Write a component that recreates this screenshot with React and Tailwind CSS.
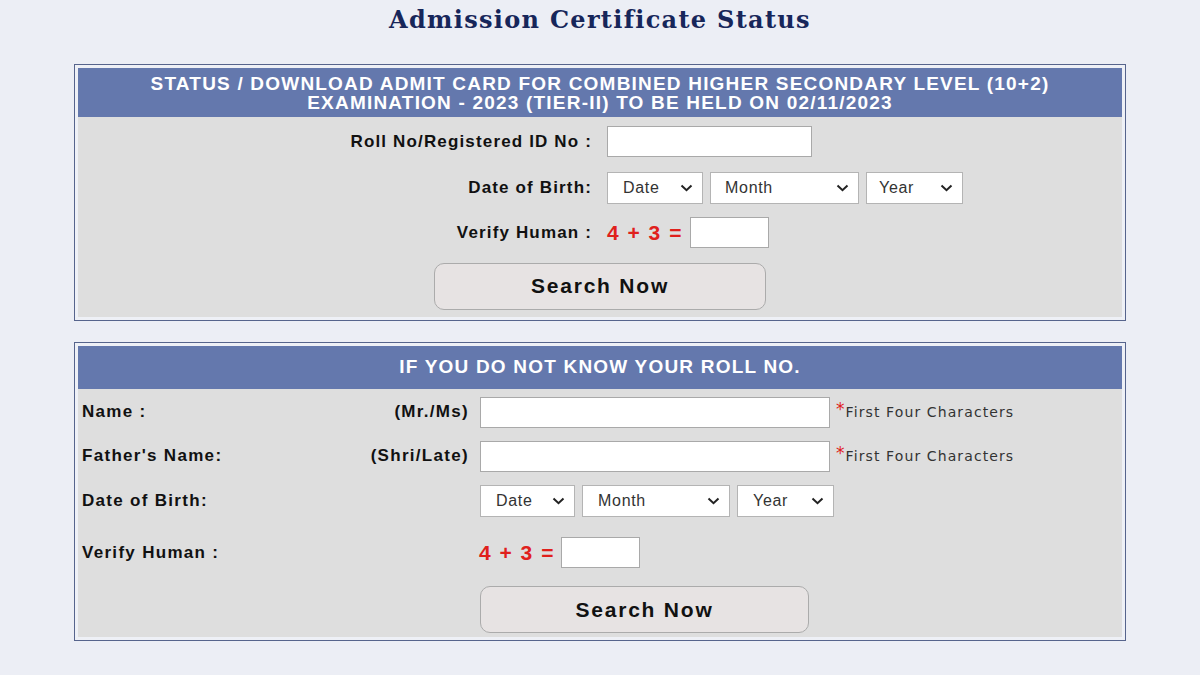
import React from "react";

const Chevron = () => (
  <svg width="13" height="8" viewBox="0 0 13 8" className="shrink-0">
    <polyline points="1.5,1.5 6.5,6.2 11.5,1.5" fill="none" stroke="#222" strokeWidth="2" />
  </svg>
);

const Select = ({ label, w, pl }) => (
  <div
    className={`h-[32px] bg-white border border-[#b4b4b4] flex items-center justify-between pr-[9px] text-[16px] tracking-[0.7px] text-[#333] ${w} ${pl}`}
  >
    <span>{label}</span>
    <Chevron />
  </div>
);

const Input = ({ w }) => <div className={`h-[31px] bg-white border border-[#a9a9a9] ${w}`} />;

const Button = ({ w }) => (
  <div
    className={`h-[47px] ${w} rounded-[10px] border border-[#ababab] bg-[#e7e3e3] flex items-center justify-center text-[21px] font-bold tracking-[1.8px] text-[#111]`}
  >
    Search Now
  </div>
);

const Note = () => (
  <span
    className="ml-[6px] text-[14px] text-[#333] tracking-[1.1px]"
    style={{ fontFamily: '"DejaVu Sans", Verdana, sans-serif' }}
  >
    <span className="text-[#e0201c] text-[17px] relative top-[-2px]">*</span>First Four Characters
  </span>
);

export default function App() {
  return (
    <div
      className="w-[1200px] h-[675px] bg-[#eceef5] overflow-hidden"
      style={{ fontFamily: '"Liberation Sans", Arial, sans-serif' }}
    >
      <div className="h-[64px] pt-[5px] text-center">
        <h1
          className="text-[24px] leading-[30px] font-bold text-[#17265a] tracking-[1.3px]"
          style={{ fontFamily: '"DejaVu Serif", "Liberation Serif", serif' }}
        >
          Admission Certificate Status
        </h1>
      </div>

      {/* Panel 1 */}
      <div className="w-[1052px] mx-auto border border-[#56648c] p-[3px] bg-[#eef0f6]">
        <div className="h-[49px] bg-[#6478ad] flex flex-col items-center justify-center text-white font-bold text-[19px] leading-[19px] tracking-[1.2px]">
          <div>STATUS / DOWNLOAD ADMIT CARD FOR COMBINED HIGHER SECONDARY LEVEL (10+2)</div>
          <div>EXAMINATION - 2023 (TIER-II) TO BE HELD ON 02/11/2023</div>
        </div>
        <div className="bg-[#dedede] pt-[9px] pb-[7px] text-[#111]">
          <div className="grid grid-cols-2 items-center">
            <div className="text-right pr-[8px] font-bold text-[17px] tracking-[1.15px]">Roll No/Registered ID No :</div>
            <div className="pl-[7px]">
              <Input w="w-[205px]" />
            </div>
          </div>
          <div className="grid grid-cols-2 items-center mt-[15px]">
            <div className="text-right pr-[8px] font-bold text-[17px] tracking-[1.15px]">Date of Birth:</div>
            <div className="pl-[7px] flex gap-[7px]">
              <Select label="Date" w="w-[96px]" pl="pl-[15px]" />
              <Select label="Month" w="w-[149px]" pl="pl-[14px]" />
              <Select label="Year" w="w-[97px]" pl="pl-[12px]" />
            </div>
          </div>
          <div className="grid grid-cols-2 items-center mt-[13px]">
            <div className="text-right pr-[8px] font-bold text-[17px] tracking-[1.15px]">Verify Human :</div>
            <div className="pl-[7px] flex items-center gap-[7px]">
              <span className="text-[#e0201c] font-bold text-[21px] tracking-[1.5px] whitespace-pre">4 + 3 =</span>
              <Input w="w-[79px]" />
            </div>
          </div>
          <div className="mt-[14px] flex justify-center">
            <Button w="w-[332px]" />
          </div>
        </div>
      </div>

      {/* Panel 2 */}
      <div className="w-[1052px] mx-auto mt-[21px] border border-[#56648c] p-[3px] bg-[#eef0f6]">
        <div className="h-[43px] bg-[#6478ad] flex items-center justify-center text-white font-bold text-[19px] tracking-[1.2px]">
          IF YOU DO NOT KNOW YOUR ROLL NO.
        </div>
        <div className="bg-[#dedede] pt-[8px] pb-[4px] pl-[4px] text-[#111]">
          <div className="flex items-center">
            <div className="w-[398px] flex justify-between pr-[11px] font-bold text-[17px] tracking-[1.3px]">
              <span>Name :</span>
              <span>(Mr./Ms)</span>
            </div>
            <Input w="w-[350px]" />
            <Note />
          </div>
          <div className="flex items-center mt-[13px]">
            <div className="w-[398px] flex justify-between pr-[11px] font-bold text-[17px] tracking-[1.3px]">
              <span>Father's Name:</span>
              <span>(Shri/Late)</span>
            </div>
            <Input w="w-[350px]" />
            <Note />
          </div>
          <div className="flex items-center mt-[13px]">
            <div className="w-[398px] font-bold text-[17px] tracking-[1.3px]">Date of Birth:</div>
            <div className="flex gap-[7px]">
              <Select label="Date" w="w-[95px]" pl="pl-[15px]" />
              <Select label="Month" w="w-[148px]" pl="pl-[15px]" />
              <Select label="Year" w="w-[97px]" pl="pl-[15px]" />
            </div>
          </div>
          <div className="flex items-center mt-[20px]">
            <div className="w-[397px] font-bold text-[17px] tracking-[1.3px]">Verify Human :</div>
            <div className="flex items-center gap-[6px]">
              <span className="text-[#e0201c] font-bold text-[21px] tracking-[1.5px] whitespace-pre">4 + 3 =</span>
              <Input w="w-[79px]" />
            </div>
          </div>
          <div className="mt-[18px] pl-[398px]">
            <Button w="w-[329px]" />
          </div>
        </div>
      </div>
    </div>
  );
}
